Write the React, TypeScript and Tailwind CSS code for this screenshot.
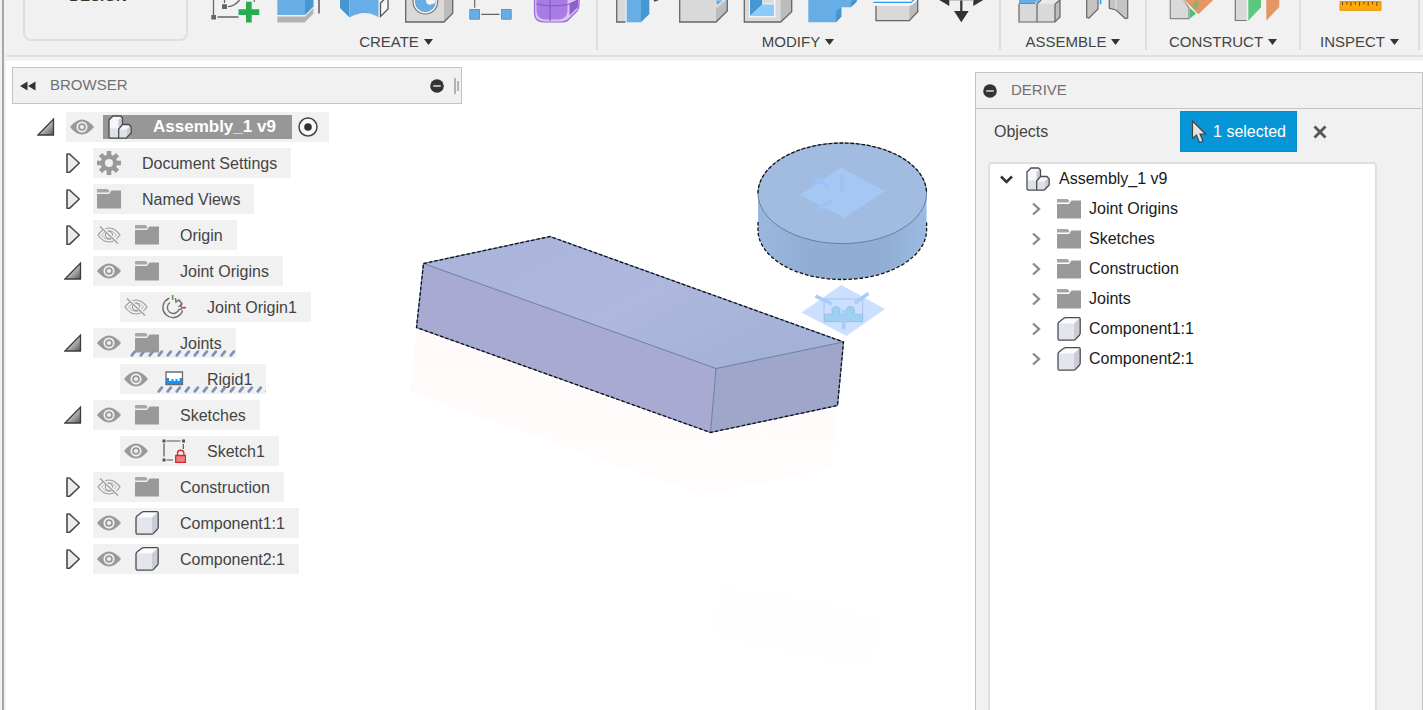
import type { ReactNode } from "react";

const INK = "#666666";
const BLUE = "#68aee6";
const DEEP = "#4596d1";
const FACE = "#d9d9d9";
const SIDE = "#bcbcbc";

function Caret() {
  return (
    <svg width="9" height="7" viewBox="0 0 9 7" aria-hidden="true">
      <path d="M0 0h9L4.500 6z" fill="#333" />
    </svg>
  );
}

type Tool = { name: string; x: number; art: ReactNode };

const createTools: Tool[] = [
  {
    name: "Create sketch",
    x: 204,
    art: (
      <>
        <path d="M213.500 0V15M217.500 17H238.500M224.500 0V3M228 6.700Q235 6 239.500 0M254.300 0V1.700" stroke={INK} fill="none" strokeWidth="1.300" />
        <path d="M211.300 15h4.700v4.500h-4.700zM222 4.300h5V9h-5z" fill={INK} />
        <path d="M246 1.700h5.700v7.600h7.600V15h-7.600v7.400H246V15h-7.500V9.300h7.500z" fill="#27ad50" />
      </>
    ),
  },
  {
    name: "Extrude",
    x: 268,
    art: (
      <>
        <path d="M277.300 0H305V15H277.300z" fill={BLUE} />
        <path d="M305 0H313.500V6.500L305 15z" fill={DEEP} />
        <path d="M277.300 16.500H305L313.500 8V13.500L304.500 22.500H277.300z" fill="#b3b3b3" />
        <path d="M319 0V13.500" stroke="#444" strokeWidth="1.300" />
      </>
    ),
  },
  {
    name: "Revolve",
    x: 332,
    art: (
      <>
        <path d="M340 0H349.500V17.500L340 8z" fill={DEEP} />
        <path d="M349.500 0H378.500V17.300Q365 8.500 349.500 17.500z" fill={BLUE} />
        <path d="M380.500 3L388 -4V9L380.500 16.500z" fill="#f7f7f7" stroke="#555" strokeWidth="1.300" />
      </>
    ),
  },
  {
    name: "Hole",
    x: 396,
    art: (
      <>
        <path d="M405.700 -2V22H444L452.700 13.300V-2" fill={FACE} />
        <path d="M444 0H452.700V13.300L444 22z" fill={SIDE} />
        <path d="M405.700 -2V22H444L452.700 13.300V-2" fill="none" stroke={INK} strokeWidth="1.300" />
        <circle cx="425.300" cy="1.700" r="12.300" fill="#f4f4f4" stroke="#777" strokeWidth="1.200" />
        <circle cx="425.300" cy="1.700" r="10" fill={BLUE} stroke="#5a88b0" strokeWidth=".6" />
        <path d="M426 -2Q425 8 435 3L436 -3z" fill="#f4f4f4" />
      </>
    ),
  },
  {
    name: "Rectangular pattern",
    x: 460,
    art: (
      <>
        <path d="M474.700 0V7.700M481.300 14.300H499.500" stroke={INK} strokeWidth="1.200" />
        <path d="M469.800 9.500h9.700v9.700h-9.700zM501.500 9.500h9.700v9.700h-9.700z" fill={BLUE} stroke="#4a9bd8" />
      </>
    ),
  },
  {
    name: "Create form",
    x: 524,
    art: (
      <>
        <path d="M534.500 -2V13Q534.500 22 544 22H561Q566 22 569 19L577 11Q579 8.500 579 5V-2" fill="#d9c4f6" stroke="#9468cc" strokeWidth="1.200" />
        <path d="M536.500 0H567.500V12Q566 19 559 19.500H544Q537 18.500 536.500 11z" fill="#a97be4" />
        <path d="M569.500 4L578 0V7L569.500 15.500z" fill="#8f5fcb" />
        <path d="M550 0V21M536.500 4Q552 7.500 568 4.500L578 0" stroke="#8257be" fill="none" />
      </>
    ),
  },
];

const modifyTools: Tool[] = [
  {
    name: "Press pull",
    x: 606,
    art: (
      <>
        <path d="M625.500 22H616.700V-1H625.500" fill={FACE} stroke={INK} strokeWidth="1.300" />
        <path d="M626.700 0H641V22.300H626.700z" fill={BLUE} />
        <path d="M641 0H649.300V14L641 22.300z" fill={DEEP} />
        <path d="M653.500 0H659L654.500 1.800z" fill="#444" />
      </>
    ),
  },
  {
    name: "Fillet",
    x: 670,
    art: (
      <>
        <path d="M679.700 -2V22H716L727.300 11V-2" fill={FACE} />
        <path d="M716 9L727.300 -1V11L716 22z" fill={SIDE} />
        <path d="M679.700 -2V22H716L727.300 11V-2" fill="none" stroke={INK} strokeWidth="1.300" />
        <path d="M715.500 0H724L716.500 6z" fill={BLUE} stroke="#f5f5f5" strokeWidth=".7" />
      </>
    ),
  },
  {
    name: "Shell",
    x: 734,
    art: (
      <>
        <path d="M744.300 -2V22H780.700L791.700 11.700V-2" fill={FACE} />
        <path d="M780.700 0H791.700V11.700L780.700 22z" fill={SIDE} />
        <path d="M744.300 -2V22H780.700L791.700 11.700V-2" fill="none" stroke={INK} strokeWidth="1.300" />
        <path d="M749 0H775.500V17.300H749z" fill="#f6f6f6" />
        <path d="M750 0H762.300V4.500L750 16z" fill={DEEP} />
        <path d="M750 16L762.300 4.500H774V16z" fill="#8ccbfa" />
        <path d="M762.500 0H774V3.500H762.500z" fill="#dddddd" />
      </>
    ),
  },
  {
    name: "Combine",
    x: 798,
    art: (
      <>
        <path d="M808.300 0H856.700V1.700L850.700 7.300H841.300V16.700L836 22.300H808.300z" fill={BLUE} />
        <path d="M836 11L841.300 7.300V16.700L836 22.300zM850.700 2L853 0H856.700V1.700L850.700 7.300z" fill={DEEP} />
      </>
    ),
  },
  {
    name: "Offset face",
    x: 862,
    art: (
      <>
        <path d="M876 6V20.700H909.300L917.700 11.700V-2L909.300 6z" fill={FACE} />
        <path d="M909.300 7L917.700 0V11.700L909.300 20.700z" fill={SIDE} />
        <path d="M876 6V20.700H909.300L917.700 11.700V0" fill="none" stroke={INK} strokeWidth="1.300" />
        <path d="M873 2.500H911L915 -1" fill="none" stroke="#f8f8f8" strokeWidth="5" />
        <path d="M873.300 2.400H911L914 0" fill="none" stroke="#2e97e8" strokeWidth="1.300" />
      </>
    ),
  },
  {
    name: "Move",
    x: 926,
    art: (
      <>
        <path d="M961.300 0V13" stroke="#333" strokeWidth="2.200" />
        <path d="M954 11H968.700L961.300 22.300zM939.300 0H949.300V6zM983.300 0H973.300V6z" fill="#333" />
        <path d="M949 .3H974" stroke="#aaa" strokeWidth=".8" />
      </>
    ),
  },
];

const assembleTools: Tool[] = [
  {
    name: "New component",
    x: 1009,
    art: (
      <>
        <path d="M1019 -1V3.500H1034L1039 -1z" fill={BLUE} />
        <path d="M1019 4H1055V22H1019z" fill={FACE} />
        <path d="M1037 4L1041 0H1060L1055 4z" fill="#e9e9e9" />
        <path d="M1055 4L1060 0V17L1055 22z" fill={SIDE} />
        <path d="M1019 4V22H1055L1060 17V0M1037 4V22M1037 4L1041 0M1055 4V22M1055 4L1060 0" fill="none" stroke={INK} strokeWidth="1.200" />
        <path d="M1019 3.500H1035L1039 0" fill="none" stroke={DEEP} />
      </>
    ),
  },
  {
    name: "Joint",
    x: 1073,
    art: (
      <>
        <path d="M1086.700 -2V17.500L1089 18L1098 9V-2" fill="#c4c4c4" stroke={INK} strokeWidth="1.200" />
        <path d="M1100.500 0V4.300" stroke="#1b9bf5" strokeWidth="1.500" />
        <path d="M1109.300 -2V8.300L1116 10L1125.300 18.500L1127.700 18V-2" fill="#c4c4c4" stroke={INK} strokeWidth="1.200" />
        <path d="M1116 0V9.500" stroke="#e4e4e4" />
      </>
    ),
  },
];

const constructTools: Tool[] = [
  {
    name: "Offset plane",
    x: 1159,
    art: (
      <>
        <path d="M1183 -1L1189 8V18.700H1170.300V-1" fill={FACE} stroke="#888" strokeWidth="1.200" />
        <path d="M1190 8V18.500L1196 13.500z" fill="#4cc077" />
        <path d="M1184.300 0H1213.300L1198.300 14.300z" fill="#e59763" />
        <path d="M1192 5.500L1197 0H1198.300V9H1195z" fill="#8fb073" />
        <path d="M1183.500 0L1198.300 15" stroke="#f5f5f5" strokeWidth=".8" />
      </>
    ),
  },
  {
    name: "Midplane",
    x: 1223,
    art: (
      <>
        <path d="M1246.700 20.500H1235.300V-1H1246.700" fill={FACE} stroke="#777" strokeWidth="1.200" />
        <path d="M1248.300 0V20.700L1261 7.300V0z" fill="#5bc77f" />
        <path d="M1266.300 0V20.700L1279.300 7V0z" fill="#e59763" />
      </>
    ),
  },
];

const inspectTools: Tool[] = [
  {
    name: "Measure",
    x: 1328,
    art: (
      <>
        <path d="M1340 1.500H1381V10.300H1340z" fill="#ffa80a" stroke="#e09600" />
        <path d="M1342.500 2V5M1346.800 2V4.500M1351 2V6M1355.300 2V4.500M1359.600 2V6M1363.900 2V4.500M1368.200 2V6M1372.500 2V4.500M1376.800 2V6" stroke="#6b4a10" />
      </>
    ),
  },
];

function ToolGroup({ label, tools, pad }: { label: string; tools: Tool[]; pad: string }) {
  return (
    <div className={`flex h-[50px] shrink-0 flex-col items-center border-r-2 border-[#dfdfdf] ${pad}`}>
      <div className="flex h-8 shrink-0">
        {tools.map((t) => (
          <button key={t.name} type="button" aria-label={t.name} className="flex w-16 items-start">
            <svg width="64" height="24" viewBox={`${t.x} 0 64 24`} aria-hidden="true">
              {t.art}
            </svg>
          </button>
        ))}
      </div>
      <button type="button" className="flex shrink-0 items-center gap-[5px] text-[15px] leading-5 text-[#444]">
        {label}
        <Caret />
      </button>
    </div>
  );
}

function Eye({ hidden }: { hidden?: boolean }) {
  if (hidden) {
    return (
      <svg width="24" height="20" viewBox="0 0 24 20" fill="none" stroke="#9c9c9c" strokeWidth="1.200" aria-hidden="true">
        <path d="M1 10Q6 3 12 3T23 10Q18 17 12 17T1 10z" />
        <path d="M4.500 10Q8 5.500 12 5.500T19.500 10Q16 14.500 12 14.500T4.500 10z" strokeWidth=".7" />
        <circle cx="12" cy="10" r="3.600" />
        <path d="M3.500 1L21.500 18.500" stroke="#f1f1f1" strokeWidth="3" />
        <path d="M3 1.500L21 18.500" />
      </svg>
    );
  }
  return (
    <svg width="24" height="20" viewBox="0 0 24 20" aria-hidden="true">
      <path d="M0 10Q6 2.500 12 2.500T24 10Q18 17.500 12 17.500T0 10z" fill="#999" />
      <circle cx="12" cy="10" r="4.700" fill="none" stroke="#f1f1f1" strokeWidth="1.700" />
      <circle cx="12" cy="10" r="2.100" fill="#f1f1f1" />
    </svg>
  );
}

function FolderIcon() {
  return (
    <svg width="24" height="24" viewBox="0 0 24 24" aria-hidden="true">
      <path d="M0 2H10.500L12.500 4L11.500 5.500H0z" fill="#a6a6a6" />
      <path d="M0 7H12L14.500 3.500H24.300V21.500H0z" fill="#999" />
    </svg>
  );
}

function GearIcon() {
  return (
    <svg width="24" height="24" viewBox="-12 -12 24 24" aria-hidden="true">
      {[0, 45, 90, 135].map((a) => (
        <path key={a} d="M-2.300 -12H2.300V12H-2.300z" fill="#999" transform={`rotate(${a})`} />
      ))}
      <circle r="8.300" fill="#999" />
      <circle r="4" fill="#f1f1f1" />
    </svg>
  );
}

function BoxIcon() {
  return (
    <svg width="24" height="24" viewBox="0 0 24 24" aria-hidden="true">
      <path d="M1 6.500L7 .8H23L17 6.500z" fill="#fbfbfd" />
      <path d="M17 6.500L23 .8V17L17 23z" fill="#c9ccd6" />
      <path d="M1 6.500H17V23H1z" fill="#e3e5ec" />
      <path d="M1 7Q1 6 2 5L6.500 1.500Q7.500 .7 9 .7H22Q23.200 .7 23.200 2V16Q23.200 17 22.500 18L18.500 22.300Q17.800 23.200 16.500 23.200H3Q1 23.200 1 21.500z" fill="none" stroke="#4b4b52" strokeWidth="1.300" />
    </svg>
  );
}

function AssemblyIcon() {
  return (
    <svg width="24" height="24" viewBox="0 0 24 24" aria-hidden="true">
      <path d="M1 5L5 1H12.500L14.500 3V9.500H21L23.200 12V18L18 23.200H2L1 22z" fill="#f6f7fb" />
      <path d="M10.500 5L14 2V10L10.500 13zM19 14L23 10.500V18L19 22.500z" fill="#c9ccd6" />
      <path d="M1.500 13.500H10V23H1.500zM11 14.500H19V23H11z" fill="#dfe1e9" />
      <path d="M1 5L5 1H12.500L14.500 3V9.500H21L23.200 12V18L18 23.200H2L1 22zM10.700 23V14L14.500 9.500" fill="none" stroke="#4b4b52" strokeWidth="1.300" strokeLinejoin="round" />
    </svg>
  );
}

function JointOriginIcon() {
  return (
    <svg width="24" height="24" viewBox="0 0 24 24" fill="none" stroke="#6c6c6c" strokeWidth="1.400" aria-hidden="true">
      <path d="M7.500 3.200A10 10 0 1 0 20.500 15.500" />
      <path d="M8 7.500A6 6 0 1 0 17 14.500L20 14M13.500 3L14 7L17 5L20 9L17.500 11H20" />
      <path d="M4.500 5.500L6 4" />
      <path d="M10.700 0V5" stroke="#5ba33a" strokeWidth="1.700" />
      <path d="M19 12.700H24" stroke="#e0393e" strokeWidth="1.700" />
    </svg>
  );
}

function RigidIcon() {
  return (
    <svg width="24" height="24" viewBox="0 0 24 24" aria-hidden="true">
      <path d="M4 5H20.500V17.500H4z" fill="#fff" />
      <path d="M4 11H7V14H9.500V12H11.500V14H13.500V12H15.500V14H17.500V11H20.500V17.500H4z" fill="#1593f5" />
      <path d="M4 5H20.500V17.500H4z" fill="none" stroke="#6c6c6c" strokeWidth="1.300" />
    </svg>
  );
}

function SketchIcon() {
  return (
    <svg width="24" height="24" viewBox="0 0 24 24" aria-hidden="true">
      <path d="M2 4.500V17.500M4.500 2H18.500M21.300 5V10M4.500 21H11" stroke="#555" strokeWidth="1.200" />
      <path d="M.5 .5h3v3h-3zM20 .5h3v3h-3zM.5 19.500h3v3h-3z" fill="#555" />
      <path d="M15.500 16V14.500A3.200 3.200 0 0 1 21.900 14.500V16" fill="none" stroke="#d8262c" strokeWidth="1.400" />
      <path d="M13.700 16.500H23.500V23.300H13.700z" fill="#e58487" stroke="#d8262c" strokeWidth="1.300" />
    </svg>
  );
}

function Twisty({ open }: { open: boolean }) {
  return (
    <svg width="18" height="20" viewBox="0 0 18 20" aria-hidden="true">
      <defs>
        <linearGradient id="twisty" x1="0" y1="0" x2="1" y2="1">
          <stop offset=".3" stopColor="#e8e8e8" />
          <stop offset="1" stopColor="#555" />
        </linearGradient>
      </defs>
      {open ? (
        <path d="M1 18L16.500 2V18z" fill="url(#twisty)" stroke="#3c3c3c" strokeWidth="1.300" />
      ) : (
        <path d="M3 1H5.500L15.300 10L5.500 19.300H3z" fill="#ececee" stroke="#4a4a4a" strokeWidth="1.600" strokeLinejoin="round" />
      )}
    </svg>
  );
}

function Hatch({ id }: { id: string }) {
  return (
    <svg className="pointer-events-none absolute right-0 bottom-px left-[37px] h-[7px] w-[calc(100%-37px)]" aria-hidden="true">
      <defs>
        <pattern id={id} width="9" height="7" patternUnits="userSpaceOnUse">
          <path d="M1.800 5.300L4.800 1.700" stroke="#7d92b8" strokeWidth="2.800" strokeLinecap="round" />
        </pattern>
      </defs>
      <rect width="100%" height="7" fill={`url(#${id})`} />
    </svg>
  );
}

type Node = {
  label: string;
  depth: 1 | 2;
  open?: boolean;
  eye?: "on" | "off";
  icon: ReactNode;
  hatch?: boolean;
};

const nodes: Node[] = [
  { label: "Document Settings", depth: 1, open: false, icon: <GearIcon /> },
  { label: "Named Views", depth: 1, open: false, icon: <FolderIcon /> },
  { label: "Origin", depth: 1, open: false, eye: "off", icon: <FolderIcon /> },
  { label: "Joint Origins", depth: 1, open: true, eye: "on", icon: <FolderIcon /> },
  { label: "Joint Origin1", depth: 2, eye: "off", icon: <JointOriginIcon /> },
  { label: "Joints", depth: 1, open: true, eye: "on", icon: <FolderIcon />, hatch: true },
  { label: "Rigid1", depth: 2, eye: "on", icon: <RigidIcon />, hatch: true },
  { label: "Sketches", depth: 1, open: true, eye: "on", icon: <FolderIcon /> },
  { label: "Sketch1", depth: 2, eye: "on", icon: <SketchIcon /> },
  { label: "Construction", depth: 1, open: false, eye: "off", icon: <FolderIcon /> },
  { label: "Component1:1", depth: 1, open: false, eye: "on", icon: <BoxIcon /> },
  { label: "Component2:1", depth: 1, open: false, eye: "on", icon: <BoxIcon /> },
];

function TreeRow({ node }: { node: Node }) {
  return (
    <li className={`flex h-9 items-center ${node.depth === 1 ? "pl-[52px]" : "pl-[108px]"}`}>
      {node.open !== undefined && (
        <button type="button" aria-label={`Toggle ${node.label}`} className="w-[29px]">
          <Twisty open={node.open} />
        </button>
      )}
      <div className="relative flex h-[30px] items-center bg-[#f1f1f1] pr-[14px] pl-1">
        {node.eye && (
          <button type="button" aria-label={`Visibility of ${node.label}`} className="mr-[14px]">
            <Eye hidden={node.eye === "off"} />
          </button>
        )}
        <span className="mr-[21px]">{node.icon}</span>
        <span className="pt-[2px]">{node.label}</span>
        {node.hatch && <Hatch id={`hatch-${node.label}`} />}
      </div>
    </li>
  );
}

function Minus() {
  return (
    <svg width="14" height="14" viewBox="0 0 14 14" aria-hidden="true">
      <circle cx="7" cy="7" r="6.800" fill="#333" />
      <path d="M3.200 7H10.800" stroke="#ddd" strokeWidth="1.500" />
    </svg>
  );
}

function BrowserPanel() {
  return (
    <aside className="relative w-[450px] shrink-0">
      <header className="mt-[6px] flex h-[37px] items-center border border-[#c4c4c4] bg-[#f1f1f1] pl-[7px]">
        <button type="button" aria-label="Collapse browser">
          <svg width="16" height="10" viewBox="0 0 16 10" aria-hidden="true">
            <path d="M0 5L7.500 .5V9.500zM8 5L15.500 .5V9.500z" fill="#333" />
          </svg>
        </button>
        <h2 className="ml-[14px] flex-1 text-[15px] text-[#707070]">BROWSER</h2>
        <button type="button" aria-label="Hide browser" className="mr-[10px]">
          <Minus />
        </button>
        <svg width="6" height="16" viewBox="0 0 6 16" className="mr-px" aria-hidden="true">
          <path d="M1 0V16M4 3V13" stroke="#888" strokeWidth="1.200" />
        </svg>
      </header>
      <ul className="mt-[5px] text-base leading-6 text-[#444]">
        <li className="flex h-9 items-center pl-[25px]">
          <button type="button" aria-label="Toggle assembly" className="w-[29px]">
            <Twisty open />
          </button>
          <div className="flex h-[30px] items-center bg-[#f1f1f1] pr-[11px] pl-1">
            <button type="button" aria-label="Visibility of assembly">
              <Eye />
            </button>
            <div className="ml-[9px] flex h-6 items-center bg-[#979797] pr-4 pl-[5px] text-[17px] font-bold text-white">
              <AssemblyIcon />
              <span className="ml-[21px]">Assembly_1 v9</span>
            </div>
            <input type="radio" name="active" aria-label="Activate Assembly_1" defaultChecked className="peer sr-only" />
            <svg width="20" height="20" viewBox="0 0 20 20" className="ml-[6px]" aria-hidden="true">
              <circle cx="10" cy="10" r="9" fill="#fafafa" stroke="#444" strokeWidth="1.500" />
              <circle cx="10" cy="10" r="3.800" fill="#333" />
            </svg>
          </div>
        </li>
        {nodes.map((n) => (
          <TreeRow key={n.label} node={n} />
        ))}
      </ul>
    </aside>
  );
}

const objects: { label: string; icon: ReactNode }[] = [
  { label: "Joint Origins", icon: <FolderIcon /> },
  { label: "Sketches", icon: <FolderIcon /> },
  { label: "Construction", icon: <FolderIcon /> },
  { label: "Joints", icon: <FolderIcon /> },
  { label: "Component1:1", icon: <BoxIcon /> },
  { label: "Component2:1", icon: <BoxIcon /> },
];

function DerivePanel() {
  return (
    <aside className="relative mt-[11px] flex w-[448px] shrink-0 flex-col border border-b-0 border-[#c4c4c4] bg-[#f1f1f1]">
      <header className="flex h-9 items-center border-b border-[#c4c4c4] pl-[7px]">
        <button type="button" aria-label="Collapse derive">
          <Minus />
        </button>
        <h2 className="ml-[14px] text-[15px] text-[#707070]">DERIVE</h2>
      </header>
      <div className="mt-[2px] flex h-[41px] items-center pl-[18px] text-base text-[#444]">
        <span className="w-[186px]">Objects</span>
        <button type="button" className="flex h-full w-[117px] items-center justify-center gap-[6px] border border-[#0a8ccb] bg-[#0696d7] text-white">
          <svg width="16" height="24" viewBox="0 0 16 24" aria-hidden="true">
            <path d="M1.500 1V18.500L5.500 15L8.500 22.500L12 21L9 14H14.500z" fill="#e4e4e4" stroke="#444" strokeWidth="1.200" />
          </svg>
          1 selected
        </button>
        <button type="button" aria-label="Clear selection" className="ml-4">
          <svg width="14" height="14" viewBox="0 0 14 14" aria-hidden="true">
            <path d="M1.500 1.500L12.500 12.500M12.500 1.500L1.500 12.500" stroke="#555" strokeWidth="2.800" />
          </svg>
        </button>
      </div>
      <ul className="mt-[10px] mr-[45px] ml-3 flex-1 rounded-t border-2 border-b-0 border-[#e0e0e0] bg-white text-base leading-6 text-[#1a1a1a]">
        <li className="flex h-[30px] items-center pl-[10px]">
          <button type="button" aria-label="Collapse assembly" className="w-[26px]">
            <svg width="13" height="9" viewBox="0 0 13 9" aria-hidden="true">
              <path d="M1 1.500L6.500 7L12 1.500" fill="none" stroke="#333" strokeWidth="2.500" />
            </svg>
          </button>
          <AssemblyIcon />
          <span className="ml-[9px]">Assembly_1 v9</span>
        </li>
        {objects.map((o) => (
          <li key={o.label} className="flex h-[30px] items-center pl-[42px]">
            <button type="button" aria-label={`Expand ${o.label}`} className="w-[25px]">
              <svg width="9" height="14" viewBox="0 0 9 14" aria-hidden="true">
                <path d="M1 1.500L7 7L1 12.500" fill="none" stroke="#8a8a8a" strokeWidth="2.300" />
              </svg>
            </button>
            {o.icon}
            <span className="ml-2">{o.label}</span>
          </li>
        ))}
      </ul>
    </aside>
  );
}

function Viewport() {
  return (
    <svg className="absolute inset-0 h-full w-full" viewBox="6 61 1417 649" role="img" aria-label="Model view">
      <defs>
        <linearGradient id="topFace" x1="0" y1="0" x2="1" y2=".6">
          <stop offset="0" stopColor="#aab3da" />
          <stop offset=".6" stopColor="#aeb7dd" />
          <stop offset="1" stopColor="#a3b2d6" />
        </linearGradient>
        <linearGradient id="reflection" x1="0" y1="0" x2="0" y2="1">
          <stop offset="0" stopColor="#fffaf9" />
          <stop offset="1" stopColor="#fffdfc" />
        </linearGradient>
        <linearGradient id="wall" x1="0" y1="0" x2="1" y2="0">
          <stop offset="0" stopColor="#9ab8df" />
          <stop offset=".3" stopColor="#92add3" />
          <stop offset=".75" stopColor="#92add3" />
          <stop offset="1" stopColor="#9bbbe5" />
        </linearGradient>
      </defs>
      <path d="M417 327L410 392L702 495L831 468L837 405L710 432z" fill="url(#reflection)" />
      <path d="M720 588Q790 592 881 620Q880 642 868 664Q790 655 714 634z" fill="#fefefe" />
      <path d="M423.500 263.500L550 236.500L843.500 342L716 368.500z" fill="url(#topFace)" />
      <path d="M423.500 263.500L716 368.500L710.500 432.500L416.500 327.500z" fill="#a9aad2" />
      <path d="M716 368.500L843.500 342L837.500 405.500L710.500 432.500z" fill="#a0a5ca" />
      <path d="M423.500 263.500L716 368.500L843.500 342M716 368.500L710.500 432.500" fill="none" stroke="#66809f" />
      <path d="M423.500 263.500L550 236.500L843.500 342L837.500 405.500L710.500 432.500L416.500 327.500z" fill="none" stroke="#6886ab" strokeWidth="1.200" />
      <path d="M423.500 263.500L550 236.500L843.500 342L837.500 405.500L710.500 432.500L416.500 327.500z" fill="none" stroke="#111" strokeWidth="1.300" strokeDasharray="3.500 2" />
      <path d="M758 193.300V230A84.300 49.500 0 0 0 926.600 230V193.300z" fill="url(#wall)" />
      <ellipse cx="842.300" cy="193.300" rx="84.300" ry="50.300" fill="#a1bce0" stroke="#66809f" />
      <path d="M758 193.300A84.300 50.300 0 0 1 926.600 193.300M758 222V230A84.300 49.500 0 0 0 926.600 230V222" fill="none" stroke="#111" strokeWidth="1.300" strokeDasharray="3.500 2" />
      <path d="M840.700 167.500L885 191L844.500 217.700L800 195z" fill="#a5c7f3" />
      <path d="M814 178L829 187M842.300 175V193M817.500 210L832.500 200" stroke="#9cc2f6" strokeWidth="3.800" />
      <path d="M841.300 285L885 309L846.500 336L801.500 312.500z" fill="#cbdffe" />
      <path d="M824 299H862.700V321.700H824z" fill="none" stroke="#a8c3e8" />
      <path d="M824.500 314.300H832V309L834 306.700H838L840 309V314.300H846.300V309L848.300 306.700H852.500L854.300 309V314.300H862.500V321.500H824.500z" fill="#9ed0ef" stroke="#90bfe4" strokeWidth=".8" />
      <path d="M815.500 296L832 304M868.500 293.300L855 303M843.700 310V329" stroke="#a9cbfb" strokeWidth="3.500" />
    </svg>
  );
}

export default function App() {
  return (
    <div className="flex h-screen overflow-hidden bg-white font-['Liberation_Sans',Arial,sans-serif]">
      <div className="w-[6px] shrink-0 border-r-2 border-l-2 border-[#f1f1f1] bg-[#a6a6a6]" />
      <div className="flex min-w-0 flex-1 flex-col">
        <nav className="h-[61px] shrink-0 overflow-hidden bg-[#f3f3f3]">
          <div className="flex h-[57px] items-start border-b-2 border-[#dfdfdf] bg-[#f1f1f1]">
            <button
              type="button"
              className="-mt-8 mr-[10px] ml-[17px] flex h-[73px] w-[165px] shrink-0 items-start justify-center gap-[6px] rounded-lg border-2 border-[#dfdfdf] pt-[16px] text-[15px] leading-5 font-bold text-[#333]"
            >
              DESIGN
              <span className="self-start pt-[6px]">
                <Caret />
              </span>
            </button>
            <ToolGroup label="CREATE" tools={createTools} pad="pr-2 pl-[6px]" />
            <ToolGroup label="MODIFY" tools={modifyTools} pad="pr-[9px] pl-2" />
            <ToolGroup label="ASSEMBLE" tools={assembleTools} pad="px-2" />
            <ToolGroup label="CONSTRUCT" tools={constructTools} pad="px-3" />
            <ToolGroup label="INSPECT" tools={inspectTools} pad="px-[19px]" />
          </div>
        </nav>
        <main className="relative flex min-h-0 flex-1 justify-between pl-[6px]">
          <Viewport />
          <BrowserPanel />
          <DerivePanel />
        </main>
      </div>
    </div>
  );
}
